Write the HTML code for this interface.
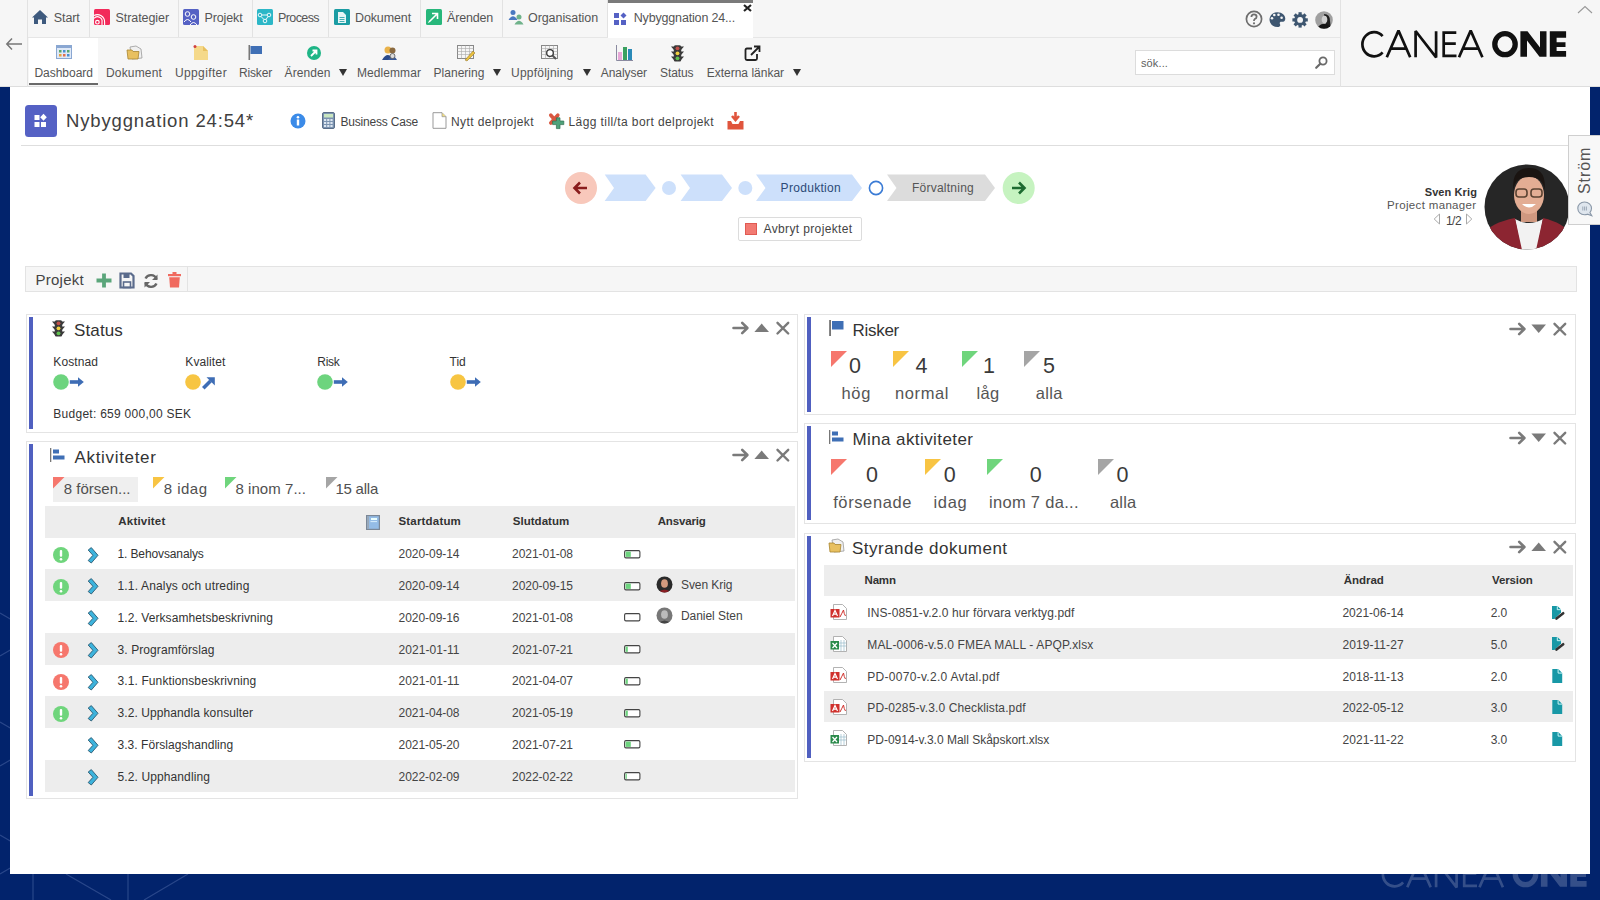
<!DOCTYPE html>
<html><head><meta charset="utf-8">
<style>
*{box-sizing:border-box;margin:0;padding:0}
html,body{width:1600px;height:900px;overflow:hidden}
body{font-family:"Liberation Sans",sans-serif;color:#333;background:#02236c;position:relative}
.a{position:absolute;white-space:nowrap}
svg.a{overflow:visible}
</style></head><body>
<svg class="a" style="left:0px;top:0px" width="1600" height="900" viewBox="0 0 1600 900">
<g stroke="#3a5697" stroke-width="1.2" fill="none" opacity="0.7">
<line x1="0" y1="613" x2="12" y2="620"/>
<line x1="0" y1="656" x2="12" y2="649"/>
<line x1="0" y1="722" x2="12" y2="729"/>
<line x1="0" y1="766" x2="12" y2="759"/>
<line x1="0" y1="835" x2="12" y2="842"/>
<line x1="0" y1="874" x2="12" y2="867"/>
<line x1="33" y1="874" x2="33" y2="900"/>
<line x1="128" y1="874" x2="128" y2="900"/>
<line x1="66" y1="874" x2="111" y2="900"/>
<line x1="188" y1="874" x2="144" y2="900"/>
</g></svg>
<div class="a" style="left:0px;top:0px;width:1600px;height:87px;background:#f6f6f6;border-bottom:1px solid #dedede"></div>
<div class="a" style="left:27px;top:0px;width:1px;height:87px;background:#e2e2e2"></div>
<div class="a" style="left:1340px;top:0px;width:1px;height:87px;background:#e2e2e2"></div>
<div class="a" style="left:28px;top:37px;width:1312px;height:1px;background:#e6e6e6"></div>
<div class="a" style="left:89px;top:0px;width:1px;height:37px;background:#e2e2e2"></div>
<div class="a" style="left:178px;top:0px;width:1px;height:37px;background:#e2e2e2"></div>
<div class="a" style="left:252px;top:0px;width:1px;height:37px;background:#e2e2e2"></div>
<div class="a" style="left:328px;top:0px;width:1px;height:37px;background:#e2e2e2"></div>
<div class="a" style="left:420px;top:0px;width:1px;height:37px;background:#e2e2e2"></div>
<div class="a" style="left:502px;top:0px;width:1px;height:37px;background:#e2e2e2"></div>
<div class="a" style="left:607px;top:0px;width:1px;height:37px;background:#e2e2e2"></div>
<div class="a" style="left:608px;top:0px;width:145px;height:38px;background:#fff"></div>
<div class="a" style="left:608px;top:0px;width:145px;height:3px;background:#7a7a7a"></div>
<svg class="a" style="left:742px;top:3px" width="11" height="10" viewBox="0 0 11 10"><path d="M2 2 L9 8 M9 2 L2 8" stroke="#222" stroke-width="2.2"/></svg>
<svg class="a" style="left:5px;top:36.5px" width="18" height="14" viewBox="0 0 18 14"><path d="M2 7 H17 M7 1.5 L1.8 7 L7 12.5" stroke="#777" stroke-width="1.5" fill="none"/></svg>
<svg class="a" style="left:32px;top:9px" width="16" height="16" viewBox="0 0 16 16"><path d="M8 1 L16 8.5 L14 8.5 L14 15 L10 15 L10 10.5 L6 10.5 L6 15 L2 15 L2 8.5 L0 8.5 Z" fill="#3e5a7e"/></svg>
<div class="a" style="left:53.80px;top:12.42px;font-size:12.5px;line-height:12.5px;color:#555;letter-spacing:-0.099px;">Start</div>
<svg class="a" style="left:94px;top:9px" width="16" height="16" viewBox="0 0 16 16"><rect x="0" y="0" width="16" height="16" rx="1.5" fill="#f22a5a"/><circle cx="3.4" cy="13.2" r="1.8" fill="none" stroke="#fff" stroke-width="1.2"/><path d="M0 9.3 A4.6 4.6 0 0 1 8 13.2 V16 M0 6.6 A7.2 7.2 0 0 1 10.6 13.2 V16" stroke="#fff" stroke-width="1.1" fill="none"/></svg>
<div class="a" style="left:115.50px;top:12.42px;font-size:12.5px;line-height:12.5px;color:#555;letter-spacing:-0.069px;">Strategier</div>
<svg class="a" style="left:183px;top:9px" width="16" height="16" viewBox="0 0 16 16"><rect x="0" y="0" width="16" height="16" rx="1.5" fill="#5561c4"/><circle cx="4.5" cy="5" r="2.3" fill="none" stroke="#fff" stroke-width="1"/><circle cx="10.5" cy="8" r="2.3" fill="none" stroke="#fff" stroke-width="1"/><path d="M1 13 Q4.5 8 8 13 M7 16 Q10.5 11 14 16" stroke="#fff" stroke-width="1" fill="none"/></svg>
<div class="a" style="left:204.50px;top:12.42px;font-size:12.5px;line-height:12.5px;color:#555;letter-spacing:-0.129px;">Projekt</div>
<svg class="a" style="left:256.5px;top:9px" width="16" height="16" viewBox="0 0 16 16"><rect x="0" y="0" width="16" height="16" rx="1.5" fill="#2cb7c7"/><circle cx="3" cy="6" r="1.8" fill="none" stroke="#fff" stroke-width="0.9"/><circle cx="12" cy="6" r="1.8" fill="none" stroke="#fff" stroke-width="0.9"/><circle cx="8" cy="12" r="1.8" fill="none" stroke="#fff" stroke-width="0.9"/><path d="M4.8 6 H10.2 M4 7.5 L7 10.5 M11 7.5 L9 10.5" stroke="#fff" stroke-width="0.9"/></svg>
<div class="a" style="left:278.00px;top:12.42px;font-size:12.5px;line-height:12.5px;color:#555;letter-spacing:-0.593px;">Process</div>
<svg class="a" style="left:334px;top:9px" width="16" height="16" viewBox="0 0 16 16"><rect x="0" y="0" width="16" height="16" rx="1.5" fill="#1a9ca3"/><path d="M4 3 H9 L12 6 V14 H4 Z" fill="#fff" opacity="0.9"/><path d="M5.5 8.5 H10.5 M5.5 10.5 H10.5 M5.5 12.5 H10.5" stroke="#1a9ca3" stroke-width="0.8"/></svg>
<div class="a" style="left:355.00px;top:12.42px;font-size:12.5px;line-height:12.5px;color:#555;letter-spacing:-0.121px;">Dokument</div>
<svg class="a" style="left:426px;top:9px" width="16" height="16" viewBox="0 0 16 16"><rect x="0" y="0" width="16" height="16" rx="1.5" fill="#27b77b"/><path d="M3 13 L11 5 M6 4.5 H11.5 V10" stroke="#fff" stroke-width="1.6" fill="none"/><path d="M2 14 L5 11" stroke="#fff" stroke-width="1" opacity=".6"/></svg>
<div class="a" style="left:447.00px;top:12.42px;font-size:12.5px;line-height:12.5px;color:#555;letter-spacing:-0.179px;">Ärenden</div>
<svg class="a" style="left:508px;top:9px" width="16" height="16" viewBox="0 0 16 16"><circle cx="5" cy="3.5" r="2.5" fill="#4a78c0"/><path d="M0.5 11 Q5 3.5 9.5 11 Z" fill="#4a78c0"/><circle cx="11" cy="8" r="2.5" fill="#6fb28a"/><path d="M6.5 15.5 Q11 8 15.5 15.5 Z" fill="#6fb28a"/></svg>
<div class="a" style="left:528.00px;top:12.42px;font-size:12.5px;line-height:12.5px;color:#555;letter-spacing:-0.072px;">Organisation</div>
<svg class="a" style="left:614px;top:11.5px" width="16" height="16" viewBox="0 0 16 16"><rect x="0" y="1" width="5" height="5" fill="#5561c4"/><path d="M9.5 0.5 L12.5 3.5 L9.5 6.5 L6.5 3.5 Z" fill="#5561c4"/><rect x="0" y="8" width="5" height="5" fill="#5561c4"/><rect x="7" y="8" width="5" height="5" fill="#5561c4"/></svg>
<div class="a" style="left:633.70px;top:12.42px;font-size:12.5px;line-height:12.5px;color:#555;letter-spacing:-0.163px;">Nybyggnation 24...</div>
<div class="a" style="left:29px;top:38px;width:69px;height:47px;background:#fff"></div>
<div class="a" style="left:29px;top:82.5px;width:69px;height:2.5px;background:#6a6a6a"></div>
<div class="a" style="left:34.40px;top:67.34px;font-size:12px;line-height:12px;color:#555;letter-spacing:-0.011px;">Dashboard</div>
<div class="a" style="left:106.00px;top:67.34px;font-size:12px;line-height:12px;color:#555;letter-spacing:0.164px;">Dokument</div>
<div class="a" style="left:175.00px;top:67.34px;font-size:12px;line-height:12px;color:#555;letter-spacing:0.368px;">Uppgifter</div>
<div class="a" style="left:239.00px;top:67.34px;font-size:12px;line-height:12px;color:#555;letter-spacing:-0.167px;">Risker</div>
<div class="a" style="left:284.60px;top:67.34px;font-size:12px;line-height:12px;color:#555;letter-spacing:0.062px;">Ärenden</div>
<div class="a" style="left:357.00px;top:67.34px;font-size:12px;line-height:12px;color:#555;letter-spacing:0.073px;">Medlemmar</div>
<div class="a" style="left:433.60px;top:67.34px;font-size:12px;line-height:12px;color:#555;letter-spacing:0.011px;">Planering</div>
<div class="a" style="left:511.00px;top:67.34px;font-size:12px;line-height:12px;color:#555;letter-spacing:0.224px;">Uppföljning</div>
<div class="a" style="left:600.70px;top:67.34px;font-size:12px;line-height:12px;color:#555;letter-spacing:-0.048px;">Analyser</div>
<div class="a" style="left:660.00px;top:67.34px;font-size:12px;line-height:12px;color:#555;letter-spacing:-0.086px;">Status</div>
<div class="a" style="left:706.70px;top:67.34px;font-size:12px;line-height:12px;color:#555;">Externa länkar</div>
<svg class="a" style="left:339.4px;top:68.5px" width="8" height="7" viewBox="0 0 8 7"><path d="M0 0 H8 L4 7 Z" fill="#333"/></svg>
<svg class="a" style="left:493px;top:68.5px" width="8" height="7" viewBox="0 0 8 7"><path d="M0 0 H8 L4 7 Z" fill="#333"/></svg>
<svg class="a" style="left:583px;top:68.5px" width="8" height="7" viewBox="0 0 8 7"><path d="M0 0 H8 L4 7 Z" fill="#333"/></svg>
<svg class="a" style="left:793px;top:68.5px" width="8" height="7" viewBox="0 0 8 7"><path d="M0 0 H8 L4 7 Z" fill="#333"/></svg>
<svg class="a" style="left:56px;top:44.5px" width="16" height="14" viewBox="0 0 16 14"><rect x="0.5" y="0.5" width="15" height="13" fill="#dfe9f7" stroke="#8aa7d2"/><rect x="0.5" y="0.5" width="15" height="2.5" fill="#8aa7d2"/><rect x="3" y="5" width="2.5" height="2.5" fill="#5aa86a"/><rect x="7" y="5" width="2.5" height="2.5" fill="#4a8fd0"/><rect x="11" y="5" width="2.5" height="2.5" fill="#5aa86a"/><rect x="3" y="9" width="2.5" height="2.5" fill="#e8a33d"/><rect x="7" y="9" width="2.5" height="2.5" fill="#e07050"/><rect x="11" y="9" width="2.5" height="2.5" fill="#4a8fd0"/></svg>
<svg class="a" style="left:126px;top:45px" width="17" height="15" viewBox="0 0 17 15"><path d="M4 2 L10 1 L15 4 L16 13 L6 14 Z" fill="#f0f0f0" stroke="#999" stroke-width="0.8"/><path d="M1 5 H6 L7 6.5 H13 L12 14 H2 Z" fill="#e8c060" stroke="#a88530" stroke-width="0.8"/></svg>
<svg class="a" style="left:193px;top:45px" width="16" height="15" viewBox="0 0 16 15"><path d="M1 1 H10 L15 6 V15 H1 Z" fill="#f5d98a"/><path d="M10 1 V6 H15" fill="#e8c060"/><circle cx="2" cy="1.5" r="1.5" fill="#d04040"/></svg>
<svg class="a" style="left:248px;top:45px" width="15" height="15" viewBox="0 0 15 15"><rect x="0.5" y="0" width="1.6" height="15" fill="#777"/><path d="M2.5 1 H14 V9 H2.5 Z" fill="#3f6fb5"/></svg>
<svg class="a" style="left:307px;top:46px" width="14" height="14" viewBox="0 0 14 14"><circle cx="7" cy="7" r="7" fill="#1eb586"/><path d="M4 10 L9 5 M5.5 4.5 H9.5 V8.5" stroke="#fff" stroke-width="1.8" fill="none"/></svg>
<svg class="a" style="left:381px;top:45px" width="17" height="16" viewBox="0 0 17 16"><circle cx="7" cy="5" r="3.5" fill="#e9b24a"/><path d="M1 15 Q7 5 12 15 Z" fill="#2a4a8a"/><circle cx="11.5" cy="5.5" r="3" fill="#8a6a40"/><path d="M7 15 Q11.5 7 16 15 Z" fill="#3a5a9a"/><circle cx="11.5" cy="11" r="2.5" fill="#ddd" stroke="#555" stroke-width="0.8"/></svg>
<svg class="a" style="left:457px;top:45px" width="18" height="16" viewBox="0 0 18 16"><rect x="0.5" y="0.5" width="16" height="13" fill="#f6f6f6" stroke="#888"/><path d="M0.5 3.5 H16.5 M0.5 6.5 H16.5 M0.5 9.5 H16.5 M4.5 0.5 V13.5 M8.5 0.5 V13.5 M12.5 0.5 V13.5" stroke="#aaa" stroke-width="0.6"/><path d="M8 15 L16 6 L18 8 L10 16 Z" fill="#e8c040" stroke="#8a6a20" stroke-width="0.5"/></svg>
<svg class="a" style="left:541px;top:45px" width="18" height="16" viewBox="0 0 18 16"><rect x="0.5" y="0.5" width="16" height="13" fill="#f6f6f6" stroke="#888"/><path d="M0.5 3.5 H16.5 M0.5 6.5 H16.5 M0.5 9.5 H16.5 M4.5 0.5 V13.5 M8.5 0.5 V13.5 M12.5 0.5 V13.5" stroke="#aaa" stroke-width="0.6"/><circle cx="9" cy="8" r="3.3" fill="#fff" stroke="#333" stroke-width="1.3"/><path d="M11.5 10.5 L15 14" stroke="#555" stroke-width="2"/></svg>
<svg class="a" style="left:616px;top:45px" width="17" height="16" viewBox="0 0 17 16"><path d="M0.5 0 V15.5 H17" stroke="#8a8aa0" stroke-width="1" fill="none"/><rect x="2" y="7" width="4" height="8" fill="#e8a8d8"/><rect x="7" y="2" width="4" height="13" fill="#3aa060"/><rect x="12" y="4" width="4" height="11" fill="#2a8ab8"/></svg>
<svg class="a" style="left:670.5px;top:44.5px" width="13" height="17" viewBox="0 0 13 17"><rect x="2.8" y="0.3" width="7.4" height="16.2" rx="1.6" fill="#3a3a3a"/><path d="M0 1.5 H3 V5 Z M13 1.5 H10 V5 Z M0 6.5 H3 V10 Z M13 6.5 H10 V10 Z M0 11.5 H3 V15 Z M13 11.5 H10 V15 Z" fill="#3a3a3a"/><circle cx="6.5" cy="3.3" r="1.9" fill="#c0504a"/><circle cx="6.5" cy="8.3" r="1.9" fill="#f0d040"/><circle cx="6.5" cy="13.3" r="1.9" fill="#60c050"/></svg>
<svg class="a" style="left:744px;top:45px" width="17" height="16" viewBox="0 0 17 16"><path d="M8 3.5 H3 Q1.5 3.5 1.5 5 V13.5 Q1.5 15 3 15 H11.5 Q13 15 13 13.5 V9" stroke="#222" stroke-width="1.8" fill="none"/><path d="M7 10 L15 2 M10 1.5 H15.5 V7" stroke="#222" stroke-width="1.8" fill="none"/></svg>
<svg class="a" style="left:1244px;top:10px" width="20" height="20" viewBox="0 0 20 20"><circle cx="10" cy="9" r="7.6" fill="none" stroke="#6e6e6e" stroke-width="1.7"/><path d="M7.4 7 Q7.4 4.4 10 4.4 Q12.6 4.4 12.6 6.8 Q12.6 8.4 10.6 9.2 Q10 9.5 10 11" stroke="#6e6e6e" stroke-width="1.8" fill="none"/><circle cx="10" cy="13.3" r="1.1" fill="#6e6e6e"/></svg>
<svg class="a" style="left:1269px;top:12px" width="17" height="16" viewBox="0 0 17 16"><path d="M8.5 0.3 C13.3 0.3 16.3 3.3 16.3 6.8 C16.3 9.6 14 10 12.5 9.8 C11 9.6 10.3 10.8 11 12.3 C11.8 14 10.5 15 8.5 15 C4 15 0.5 11.8 0.5 7.6 C0.5 3.6 4 0.3 8.5 0.3 Z" fill="#3e5670"/><circle cx="3" cy="6.2" r="1.3" fill="#f6f6f6"/><circle cx="5.3" cy="3" r="1.3" fill="#f6f6f6"/><circle cx="9.5" cy="2.7" r="1.3" fill="#f6f6f6"/><circle cx="12.6" cy="5.7" r="1.3" fill="#f6f6f6"/></svg>
<svg class="a" style="left:1292px;top:11.5px" width="17" height="16" viewBox="0 0 17 16"><g transform="translate(8.1 7.9)" fill="#3e5670"><circle r="5.9"/><rect x="-1.6" y="-7.7" width="3.2" height="3" transform="rotate(0)"/><rect x="-1.6" y="-7.7" width="3.2" height="3" transform="rotate(45)"/><rect x="-1.6" y="-7.7" width="3.2" height="3" transform="rotate(90)"/><rect x="-1.6" y="-7.7" width="3.2" height="3" transform="rotate(135)"/><rect x="-1.6" y="-7.7" width="3.2" height="3" transform="rotate(180)"/><rect x="-1.6" y="-7.7" width="3.2" height="3" transform="rotate(225)"/><rect x="-1.6" y="-7.7" width="3.2" height="3" transform="rotate(270)"/><rect x="-1.6" y="-7.7" width="3.2" height="3" transform="rotate(315)"/><circle r="2.9" fill="#f6f6f6"/></g></svg>
<svg class="a" style="left:1315px;top:10.5px" width="18" height="18" viewBox="0 0 18 18"><defs><clipPath id="av0"><circle cx="9" cy="9" r="8.8"/></clipPath></defs><circle cx="9" cy="9" r="8.8" fill="#a0a0a0"/><g clip-path="url(#av0)"><path d="M9 3 Q15 3 15 10 L16 18 L11 14 Z" fill="#1e1e1e"/><ellipse cx="9.5" cy="8.5" rx="2.8" ry="3.8" fill="#d0d0d0"/><path d="M1 19 Q5 12 9 13 Q14 12 17 19 Z" fill="#151515"/></g></svg>
<div class="a" style="left:1135px;top:50px;width:200px;height:25px;background:#fff;border:1px solid #dcdcdc"></div>
<div class="a" style="left:1141.00px;top:57.69px;font-size:11px;line-height:11px;color:#606060;letter-spacing:0.119px;">sök...</div>
<svg class="a" style="left:1315px;top:56px" width="13" height="13" viewBox="0 0 13 13"><circle cx="8" cy="5" r="3.6" fill="none" stroke="#6a6a6a" stroke-width="1.8"/><path d="M5.3 7.7 L1.2 11.8" stroke="#6a6a6a" stroke-width="2.2" stroke-linecap="round"/></svg>
<svg class="a" style="left:1577px;top:5px" width="16" height="9" viewBox="0 0 16 9"><path d="M1 8 L8 1.5 L15 8" stroke="#999" stroke-width="1.1" fill="none"/></svg>
<svg class="a" style="left:0px;top:0px" width="1600" height="90" viewBox="0 0 1600 90"><g transform="translate(0 0.0)" opacity="1.0"><path d="M1382.6 36.2 A11.6 12.1 0 1 0 1382.6 52.4" stroke="#111" stroke-width="2.7" fill="none" stroke-miterlimit="1.5"/><path d="M1386.8 57.2 L1398.5 30.6 L1410.2 57.2 M1390.5 48.6 H1406.5" stroke="#111" stroke-width="2.7" fill="none" stroke-miterlimit="1.5"/><path d="M1415.6 57.2 V31.0 L1436.1 57.4 V31.2" stroke="#111" stroke-width="2.7" fill="none" stroke-miterlimit="1.5"/><path d="M1456.3 32.7 H1443.7 V55.8 H1456.5 M1443.7 43.6 H1455.8" stroke="#111" stroke-width="2.7" fill="none" stroke-miterlimit="1.5"/><path d="M1459 57.2 L1470.7 30.6 L1482.4 57.2 M1462.7 48.6 H1478.7" stroke="#111" stroke-width="2.7" fill="none" stroke-miterlimit="1.5"/><ellipse cx="1505" cy="44.2" rx="10.2" ry="10.5" stroke="#111" stroke-width="5.3" fill="none"/><path d="M1520.4 56.8 V31.2 H1527.5 L1540 47.5 V31.2 H1546.5 V56.8 H1539.5 L1527 40.5 V56.8 Z" fill="#111"/><path d="M1549.8 31.2 H1566.1 V37.8 H1556.6 V42.2 H1565.5 V47 H1556.6 V51.1 H1566.1 V56.8 H1549.8 Z" fill="#111"/></g></svg>
<div class="a" style="left:10px;top:87px;width:1580px;height:787px;background:#fff"></div>
<div class="a" style="left:25px;top:105px;width:32px;height:31.5px;background:#5561c4;border-radius:3.5px"></div>
<svg class="a" style="left:33px;top:113px" width="16" height="16" viewBox="0 0 16 16"><rect x="1.5" y="2" width="5" height="5" fill="#fff"/><path d="M10.5 0.8 L13.8 4.3 L10.5 7.8 L7.2 4.3 Z" fill="#fff"/><rect x="1.5" y="9" width="5" height="5" fill="#fff"/><rect x="8" y="9" width="5" height="5" fill="#fff"/></svg>
<div class="a" style="left:66.00px;top:112.34px;font-size:18.5px;line-height:18.5px;color:#404040;letter-spacing:0.855px;">Nybyggnation 24:54*</div>
<div class="a" style="left:21px;top:145px;width:1547px;height:1px;background:#dedede"></div>
<svg class="a" style="left:290px;top:113px" width="16" height="16" viewBox="0 0 16 16"><circle cx="8" cy="8" r="7.5" fill="#3b8be8"/><circle cx="8" cy="4.3" r="1.3" fill="#fff"/><rect x="6.8" y="6.5" width="2.4" height="6" fill="#fff"/></svg>
<svg class="a" style="left:322px;top:112px" width="13" height="17" viewBox="0 0 13 17"><rect x="0.5" y="0.5" width="12" height="16" rx="1.5" fill="#7b93b0" stroke="#5a6e88"/><rect x="2" y="2" width="9" height="3.5" fill="#c9e6c0"/><rect x="2.0" y="7" width="2.2" height="2" fill="#dde6f0"/><rect x="5.2" y="7" width="2.2" height="2" fill="#dde6f0"/><rect x="8.4" y="7" width="2.2" height="2" fill="#dde6f0"/><rect x="2.0" y="10" width="2.2" height="2" fill="#dde6f0"/><rect x="5.2" y="10" width="2.2" height="2" fill="#dde6f0"/><rect x="8.4" y="10" width="2.2" height="2" fill="#dde6f0"/><rect x="2.0" y="13" width="2.2" height="2" fill="#dde6f0"/><rect x="5.2" y="13" width="2.2" height="2" fill="#dde6f0"/><rect x="8.4" y="13" width="2.2" height="2" fill="#dde6f0"/></svg>
<div class="a" style="left:340.50px;top:115.84px;font-size:12px;line-height:12px;color:#444;letter-spacing:-0.195px;">Business Case</div>
<svg class="a" style="left:432px;top:112px" width="15" height="17" viewBox="0 0 15 17"><path d="M1 0.7 H10 L14 4.7 V16.3 H1 Z" fill="#fff" stroke="#999" stroke-width="1"/><path d="M10 0.7 V4.7 H14" fill="#f5e080" stroke="#999" stroke-width="0.8"/></svg>
<div class="a" style="left:451.00px;top:115.84px;font-size:12px;line-height:12px;color:#444;letter-spacing:0.420px;">Nytt delprojekt</div>
<svg class="a" style="left:548px;top:112px" width="17" height="17" viewBox="0 0 17 17"><path d="M2.8 3.2 L9.8 11 M9.8 3.2 L2.8 11" stroke="#d9573f" stroke-width="3.6" stroke-linecap="round"/><path d="M8.4 5.8 H12 V9 H15.8 V12.6 H12 V16.6 H8.4 V12.6 H4.6 V9 H8.4 Z" fill="#4fa27a" stroke="#2f7050" stroke-width="0.7"/></svg>
<div class="a" style="left:568.50px;top:115.84px;font-size:12px;line-height:12px;color:#444;letter-spacing:0.408px;">Lägg till/ta bort delprojekt</div>
<svg class="a" style="left:727px;top:112px" width="17" height="18" viewBox="0 0 17 18"><path d="M8.5 0 V7 M5 4 L8.5 8 L12 4" stroke="#e0553d" stroke-width="2.6" fill="none"/><path d="M0.5 9 H4 L5.5 12 H11.5 L13 9 H16.5 V17.5 H0.5 Z" fill="#e0553d"/></svg>
<svg class="a" style="left:560px;top:168px" width="480" height="40" viewBox="0 0 480 40">
<circle cx="21" cy="20" r="16" fill="#f8c8bb"/>
<path d="M27 20 H15 M20 14.5 L14.5 20 L20 25.5" stroke="#8a1c1c" stroke-width="2.6" fill="none"/>
<path d="M44.7 6.4 H85.6 L95.6 20 L85.6 33 H44.7 L54 20 Z" fill="#cde0fb"/>
<circle cx="109" cy="20" r="7" fill="#cde0fb"/>
<path d="M120.6 6.4 H162 L172 20 L162 33 H120.6 L130 20 Z" fill="#cde0fb"/>
<circle cx="185.3" cy="20" r="7" fill="#cde0fb"/>
<path d="M196 6.4 H292 L302 20 L292 33 H196 L205.5 20 Z" fill="#cde0fb"/>
<circle cx="316" cy="20" r="6.6" fill="#fff" stroke="#3a7bd5" stroke-width="1.6"/>
<path d="M327 6.4 H425 L435 20 L425 33 H327 L336.5 20 Z" fill="#dcdcdc"/>
<circle cx="458.7" cy="20" r="16" fill="#c6f3c0"/>
<path d="M452 20 H464 M459 14.5 L464.5 20 L459 25.5" stroke="#1d6b30" stroke-width="2.6" fill="none"/>
</svg>
<div class="a" style="left:780.60px;top:181.84px;font-size:12px;line-height:12px;color:#2c4a78;letter-spacing:0.303px;">Produktion</div>
<div class="a" style="left:912.00px;top:181.84px;font-size:12px;line-height:12px;color:#555;letter-spacing:0.240px;">Förvaltning</div>
<div class="a" style="left:738px;top:216.5px;width:123.5px;height:24.5px;border:1px solid #dcdcdc;border-radius:2px;background:#fff"></div>
<div class="a" style="left:745px;top:223px;width:12px;height:12px;background:#f27a72;border:1px solid #e05a52"></div>
<div class="a" style="left:763.50px;top:223.34px;font-size:12px;line-height:12px;color:#444;letter-spacing:0.366px;">Avbryt projektet</div>
<div class="a" style="left:1424.70px;top:186.69px;font-size:11px;line-height:11px;color:#333;font-weight:700;letter-spacing:0.106px;">Sven Krig</div>
<div class="a" style="left:1387.00px;top:200.27px;font-size:11.5px;line-height:11.5px;color:#555;letter-spacing:0.342px;">Project manager</div>
<div class="a" style="left:1446.00px;top:214.84px;font-size:12px;line-height:12px;color:#444;letter-spacing:-0.560px;">1/2</div>
<svg class="a" style="left:1433px;top:213px" width="8" height="12" viewBox="0 0 8 12"><path d="M6.5 1 L1.2 6 L6.5 11 Z" fill="none" stroke="#aaa" stroke-width="1"/></svg>
<svg class="a" style="left:1465px;top:213px" width="8" height="12" viewBox="0 0 8 12"><path d="M1.5 1 L6.8 6 L1.5 11 Z" fill="none" stroke="#aaa" stroke-width="1"/></svg>
<svg class="a" style="left:1484px;top:164px" width="86" height="86" viewBox="0 0 86 86"><defs><clipPath id="avb"><circle cx="43" cy="43" r="42.5"/></clipPath></defs>
<g clip-path="url(#avb)">
<rect width="86" height="86" fill="#262626"/>
<rect x="37" y="42" width="16" height="16" fill="#cf9880"/>
<path d="M31 55 Q45 63 59 55 L53 86 H37 Z" fill="#f2f2f2"/>
<path d="M0 86 V70 Q6 59 31 54 L38 86 Z M86 86 V70 Q80 59 59 54 L52 86 Z" fill="#8c2531"/>
<ellipse cx="45" cy="31" rx="15" ry="19" fill="#e3ad94"/>
<path d="M29.5 27 Q27 4 45 4 Q63 4 60.5 27 Q60 13 45 13 Q30 13 29.5 27 Z" fill="#1a1411"/>
<rect x="32" y="25" width="11" height="8" rx="3" fill="none" stroke="#5a4232" stroke-width="1.6"/>
<rect x="47" y="25" width="11" height="8" rx="3" fill="none" stroke="#5a4232" stroke-width="1.6"/>
<path d="M38 40 Q45 47 52 40 Z" fill="#fff"/>
</g></svg>
<div class="a" style="left:1568px;top:134.5px;width:32px;height:90px;background:#f8f8f8;border:1px solid #cfcfcf;border-right:none"></div>
<div class="a" style="left:1577.3px;top:193.5px;font-size:16px;line-height:16px;color:#555;letter-spacing:0.9px;transform:rotate(-90deg);transform-origin:0 0">Ström</div>
<svg class="a" style="left:1577px;top:200.5px" width="16" height="16" viewBox="0 0 16 16"><path d="M7.5 1 C11.5 1 14.5 3.8 14.5 7.3 C14.5 9 13.9 10.4 12.9 11.5 L14.8 14.8 L10.5 13.2 C9.6 13.5 8.6 13.7 7.5 13.7 C3.5 13.7 0.8 10.8 0.8 7.3 C0.8 3.8 3.5 1 7.5 1 Z" fill="#dfe6ee" stroke="#8a98a8" stroke-width="1.1"/><path d="M5.8 5.5 V9.5 M7.6 5.5 V9.5 M9.4 5.5 V9.5" stroke="#8a98a8" stroke-width="0.8"/></svg>
<div class="a" style="left:25px;top:266px;width:1552px;height:26px;background:#f6f6f6;border:1px solid #e3e3e3"></div>
<div class="a" style="left:187px;top:267px;width:1px;height:24px;background:#e3e3e3"></div>
<div class="a" style="left:35.50px;top:272.30px;font-size:15px;line-height:15px;color:#444;letter-spacing:0.260px;">Projekt</div>
<svg class="a" style="left:96px;top:273px" width="16" height="15" viewBox="0 0 16 15"><path d="M8 0.5 V14.5 M0.5 7.5 H15.5" stroke="#5aa57a" stroke-width="3.8"/></svg>
<svg class="a" style="left:120px;top:273px" width="14" height="15" viewBox="0 0 14 15"><path d="M0.5 0.5 H11 L13.5 3 V14.5 H0.5 Z" fill="none" stroke="#5a6b8c" stroke-width="2.2"/><rect x="3.5" y="1" width="6" height="4" fill="#5a6b8c"/><rect x="3.5" y="9" width="7" height="5.5" fill="none" stroke="#5a6b8c" stroke-width="1.6"/></svg>
<svg class="a" style="left:142.5px;top:272.5px" width="16" height="16" viewBox="0 0 16 16"><path d="M13.5 6 A6 6 0 0 0 2.5 5.5 M2.5 10 A6 6 0 0 0 13.5 10.5" stroke="#666" stroke-width="2.4" fill="none"/><path d="M14.5 1.5 V7 H9 Z M1.5 14.5 V9 H7 Z" fill="#666"/></svg>
<svg class="a" style="left:167.5px;top:272px" width="13" height="16" viewBox="0 0 13 16"><rect x="0" y="2" width="13" height="2.2" fill="#f06a5f"/><rect x="4.5" y="0" width="4" height="2.5" fill="#f06a5f"/><path d="M1.2 5.2 H11.8 L11 15.5 H2 Z" fill="#f06a5f"/></svg>
<div class="a" style="left:26px;top:314px;width:772px;height:118.5px;background:#fff;border:1px solid #e4e4e4"></div>
<div class="a" style="left:29px;top:317px;width:4px;height:112.0px;background:#5060c0"></div>
<svg class="a" style="left:51.5px;top:320px" width="13" height="17" viewBox="0 0 13 17"><rect x="2.8" y="0.3" width="7.4" height="16.2" rx="1.6" fill="#3a3a3a"/><path d="M0 1.5 H3 V5 Z M13 1.5 H10 V5 Z M0 6.5 H3 V10 Z M13 6.5 H10 V10 Z M0 11.5 H3 V15 Z M13 11.5 H10 V15 Z" fill="#3a3a3a"/><circle cx="6.5" cy="3.3" r="1.9" fill="#c0504a"/><circle cx="6.5" cy="8.3" r="1.9" fill="#f0d040"/><circle cx="6.5" cy="13.3" r="1.9" fill="#60c050"/></svg>
<div class="a" style="left:74.00px;top:321.61px;font-size:17px;line-height:17px;color:#333;letter-spacing:0.135px;">Status</div>
<svg class="a" style="left:732px;top:321px" width="60" height="14" viewBox="0 0 60 14"><path d="M1.5 7 H15 M10.2 1.8 L15.4 7 L10.2 12.2" stroke="#7a7a7a" stroke-width="2.6" fill="none" stroke-linecap="round" stroke-linejoin="round"/>
<path d="M22.4 11 L29.7 2.6 L37 11 Z" fill="#7a7a7a"/>
<path d="M45.5 1.8 L56.2 12.5 M56.2 1.8 L45.5 12.5" stroke="#7a7a7a" stroke-width="2.4" stroke-linecap="round"/></svg>
<div class="a" style="left:53.30px;top:356.34px;font-size:12px;line-height:12px;color:#333;letter-spacing:0.096px;">Kostnad</div>
<svg class="a" style="left:53.3px;top:374px" width="32" height="16" viewBox="0 0 32 16"><circle cx="8" cy="8" r="7.8" fill="#6dd47e"/><rect x="16.8" y="6.2" width="9.5" height="3.6" fill="#3e6db5"/><path d="M25 3.2 L30.8 8 L25 12.8 Z" fill="#3e6db5"/></svg>
<div class="a" style="left:185.30px;top:356.34px;font-size:12px;line-height:12px;color:#333;letter-spacing:0.106px;">Kvalitet</div>
<svg class="a" style="left:185.3px;top:374px" width="32" height="16" viewBox="0 0 32 16"><circle cx="8" cy="8" r="7.8" fill="#f7c542"/><path d="M18.3 14.2 L25.5 7" stroke="#3e6db5" stroke-width="3.6"/><path d="M21.5 3.2 H29.8 V11.5 Z" fill="#3e6db5"/></svg>
<div class="a" style="left:317.30px;top:356.34px;font-size:12px;line-height:12px;color:#333;letter-spacing:-0.283px;">Risk</div>
<svg class="a" style="left:317.3px;top:374px" width="32" height="16" viewBox="0 0 32 16"><circle cx="8" cy="8" r="7.8" fill="#6dd47e"/><rect x="16.8" y="6.2" width="9.5" height="3.6" fill="#3e6db5"/><path d="M25 3.2 L30.8 8 L25 12.8 Z" fill="#3e6db5"/></svg>
<div class="a" style="left:449.50px;top:356.34px;font-size:12px;line-height:12px;color:#333;letter-spacing:0.025px;">Tid</div>
<svg class="a" style="left:449.5px;top:374px" width="32" height="16" viewBox="0 0 32 16"><circle cx="8" cy="8" r="7.8" fill="#f7c542"/><rect x="16.8" y="6.2" width="9.5" height="3.6" fill="#3e6db5"/><path d="M25 3.2 L30.8 8 L25 12.8 Z" fill="#3e6db5"/></svg>
<div class="a" style="left:53.30px;top:407.84px;font-size:12px;line-height:12px;color:#333;letter-spacing:0.268px;">Budget: 659 000,00 SEK</div>
<div class="a" style="left:26px;top:441px;width:772px;height:358px;background:#fff;border:1px solid #e4e4e4"></div>
<div class="a" style="left:29px;top:444px;width:4px;height:351.5px;background:#5060c0"></div>
<svg class="a" style="left:50px;top:448px" width="15" height="14" viewBox="0 0 15 14"><rect x="0" y="0" width="1.3" height="14" fill="#777"/><rect x="3" y="1.5" width="6" height="4" fill="#3f6fb5"/><rect x="3" y="7.5" width="11.5" height="4" fill="#3f6fb5"/></svg>
<div class="a" style="left:74.50px;top:448.61px;font-size:17px;line-height:17px;color:#333;letter-spacing:0.670px;">Aktiviteter</div>
<svg class="a" style="left:732px;top:448px" width="60" height="14" viewBox="0 0 60 14"><path d="M1.5 7 H15 M10.2 1.8 L15.4 7 L10.2 12.2" stroke="#7a7a7a" stroke-width="2.6" fill="none" stroke-linecap="round" stroke-linejoin="round"/>
<path d="M22.4 11 L29.7 2.6 L37 11 Z" fill="#7a7a7a"/>
<path d="M45.5 1.8 L56.2 12.5 M56.2 1.8 L45.5 12.5" stroke="#7a7a7a" stroke-width="2.4" stroke-linecap="round"/></svg>
<div class="a" style="left:53px;top:476.5px;width:85px;height:25px;background:#efefef"></div>
<svg class="a" style="left:53px;top:477px" width="11.5" height="11.5" viewBox="0 0 11.5 11.5"><path d="M0 0 H11.5 L0 11.5 Z" fill="#f6776d"/></svg>
<div class="a" style="left:63.80px;top:481.00px;font-size:15px;line-height:15px;color:#505050;">8 försen...</div>
<svg class="a" style="left:153px;top:477px" width="11.5" height="11.5" viewBox="0 0 11.5 11.5"><path d="M0 0 H11.5 L0 11.5 Z" fill="#f8c443"/></svg>
<div class="a" style="left:163.80px;top:481.00px;font-size:15px;line-height:15px;color:#505050;letter-spacing:0.472px;">8 idag</div>
<svg class="a" style="left:225px;top:477px" width="11.5" height="11.5" viewBox="0 0 11.5 11.5"><path d="M0 0 H11.5 L0 11.5 Z" fill="#6fd57c"/></svg>
<div class="a" style="left:235.50px;top:481.00px;font-size:15px;line-height:15px;color:#505050;letter-spacing:0.043px;">8 inom 7...</div>
<svg class="a" style="left:325.5px;top:477px" width="11.5" height="11.5" viewBox="0 0 11.5 11.5"><path d="M0 0 H11.5 L0 11.5 Z" fill="#a5a5a5"/></svg>
<div class="a" style="left:335.50px;top:481.00px;font-size:15px;line-height:15px;color:#505050;letter-spacing:-0.243px;">15 alla</div>
<div class="a" style="left:45px;top:506px;width:750px;height:32px;background:#ededed"></div>
<div class="a" style="left:118.30px;top:516.27px;font-size:11.5px;line-height:11.5px;color:#333;font-weight:700;letter-spacing:0.204px;">Aktivitet</div>
<svg class="a" style="left:366px;top:515px" width="14" height="15" viewBox="0 0 14 15"><rect x="0.6" y="0.6" width="12.8" height="13.8" fill="#94bce6" stroke="#7b8796" stroke-width="1.2"/><rect x="1.2" y="1.2" width="1.8" height="12.6" fill="#9aa8b8"/><rect x="5" y="3" width="6" height="2" fill="#eaffff"/><rect x="4.5" y="6.2" width="6.5" height="0.9" fill="#e0f4ff"/></svg>
<div class="a" style="left:398.50px;top:516.27px;font-size:11.5px;line-height:11.5px;color:#333;font-weight:700;letter-spacing:0.180px;">Startdatum</div>
<div class="a" style="left:512.80px;top:516.27px;font-size:11.5px;line-height:11.5px;color:#333;font-weight:700;letter-spacing:0.020px;">Slutdatum</div>
<div class="a" style="left:657.70px;top:516.27px;font-size:11.5px;line-height:11.5px;color:#333;font-weight:700;letter-spacing:-0.164px;">Ansvarig</div>
<svg class="a" style="left:53px;top:546.8000000000001px" width="16" height="16" viewBox="0 0 16 16"><circle cx="8" cy="8" r="8" fill="#6fd57c"/><rect x="6.8" y="3" width="2.4" height="6.8" rx="1" fill="#fff"/><circle cx="8" cy="12.2" r="1.3" fill="#fff"/></svg>
<svg class="a" style="left:86.5px;top:546.6px" width="12" height="17" viewBox="0 0 12 17"><path d="M1.2 3 L4.3 0.6 L11 8.3 L4.3 16 L1.2 13.6 L5.9 8.3 Z" fill="#3db3dc" stroke="#2d5a72" stroke-width="0.9" stroke-linejoin="round"/></svg>
<div class="a" style="left:117.50px;top:548.44px;font-size:12px;line-height:12px;color:#333;letter-spacing:-0.120px;">1. Behovsanalys</div>
<div class="a" style="left:398.50px;top:548.44px;font-size:12px;line-height:12px;color:#444;letter-spacing:-0.038px;">2020-09-14</div>
<div class="a" style="left:512.00px;top:548.44px;font-size:12px;line-height:12px;color:#444;letter-spacing:-0.038px;">2021-01-08</div>
<svg class="a" style="left:624px;top:549.9px" width="17" height="9" viewBox="0 0 17 9"><rect x="0.6" y="0.6" width="15.3" height="7.3" rx="1.3" fill="#fff" stroke="#444" stroke-width="1.1"/><rect x="1.6" y="1.6" width="5.2" height="5.3" fill="#6dd47e"/></svg>
<div class="a" style="left:45px;top:569.35px;width:750px;height:31.75px;background:#ededed"></div>
<svg class="a" style="left:53px;top:578.5500000000001px" width="16" height="16" viewBox="0 0 16 16"><circle cx="8" cy="8" r="8" fill="#6fd57c"/><rect x="6.8" y="3" width="2.4" height="6.8" rx="1" fill="#fff"/><circle cx="8" cy="12.2" r="1.3" fill="#fff"/></svg>
<svg class="a" style="left:86.5px;top:578.35px" width="12" height="17" viewBox="0 0 12 17"><path d="M1.2 3 L4.3 0.6 L11 8.3 L4.3 16 L1.2 13.6 L5.9 8.3 Z" fill="#3db3dc" stroke="#2d5a72" stroke-width="0.9" stroke-linejoin="round"/></svg>
<div class="a" style="left:117.50px;top:580.19px;font-size:12px;line-height:12px;color:#333;letter-spacing:0.163px;">1.1. Analys och utreding</div>
<div class="a" style="left:398.50px;top:580.19px;font-size:12px;line-height:12px;color:#444;letter-spacing:-0.038px;">2020-09-14</div>
<div class="a" style="left:512.00px;top:580.19px;font-size:12px;line-height:12px;color:#444;letter-spacing:-0.038px;">2020-09-15</div>
<svg class="a" style="left:624px;top:581.65px" width="17" height="9" viewBox="0 0 17 9"><rect x="0.6" y="0.6" width="15.3" height="7.3" rx="1.3" fill="#fff" stroke="#444" stroke-width="1.1"/><rect x="1.6" y="1.6" width="5.2" height="5.3" fill="#6dd47e"/></svg>
<svg class="a" style="left:656px;top:575.5500000000001px" width="17" height="17" viewBox="0 0 17 17"><defs><clipPath id="sa1"><circle cx="8.5" cy="8.5" r="8"/></clipPath></defs><circle cx="8.5" cy="8.5" r="8" fill="#2a2a2a"/><g clip-path="url(#sa1)"><ellipse cx="8.5" cy="7.5" rx="3.4" ry="4.3" fill="#d49a7e"/><path d="M1 17 Q8.5 10 16 17 Z" fill="#8a1f24"/></g></svg>
<div class="a" style="left:681.00px;top:578.69px;font-size:12px;line-height:12px;color:#444;letter-spacing:-0.080px;">Sven Krig</div>
<svg class="a" style="left:86.5px;top:610.1px" width="12" height="17" viewBox="0 0 12 17"><path d="M1.2 3 L4.3 0.6 L11 8.3 L4.3 16 L1.2 13.6 L5.9 8.3 Z" fill="#3db3dc" stroke="#2d5a72" stroke-width="0.9" stroke-linejoin="round"/></svg>
<div class="a" style="left:117.50px;top:611.94px;font-size:12px;line-height:12px;color:#333;letter-spacing:0.078px;">1.2. Verksamhetsbeskrivning</div>
<div class="a" style="left:398.50px;top:611.94px;font-size:12px;line-height:12px;color:#444;letter-spacing:-0.038px;">2020-09-16</div>
<div class="a" style="left:512.00px;top:611.94px;font-size:12px;line-height:12px;color:#444;letter-spacing:-0.038px;">2021-01-08</div>
<svg class="a" style="left:624px;top:613.4px" width="17" height="9" viewBox="0 0 17 9"><rect x="0.6" y="0.6" width="15.3" height="7.3" rx="1.3" fill="#fff" stroke="#444" stroke-width="1.1"/></svg>
<svg class="a" style="left:656px;top:607.3000000000001px" width="17" height="17" viewBox="0 0 17 17"><defs><clipPath id="sa2"><circle cx="8.5" cy="8.5" r="8"/></clipPath></defs><circle cx="8.5" cy="8.5" r="8" fill="#777"/><g clip-path="url(#sa2)"><ellipse cx="8.5" cy="7.5" rx="3.4" ry="4.3" fill="#bbb"/><path d="M1 17 Q8.5 10 16 17 Z" fill="#444"/></g></svg>
<div class="a" style="left:681.00px;top:610.44px;font-size:12px;line-height:12px;color:#444;letter-spacing:-0.049px;">Daniel Sten</div>
<div class="a" style="left:45px;top:632.85px;width:750px;height:31.75px;background:#ededed"></div>
<svg class="a" style="left:53px;top:642.0500000000001px" width="16" height="16" viewBox="0 0 16 16"><circle cx="8" cy="8" r="8" fill="#f6776d"/><rect x="6.8" y="3" width="2.4" height="6.8" rx="1" fill="#fff"/><circle cx="8" cy="12.2" r="1.3" fill="#fff"/></svg>
<svg class="a" style="left:86.5px;top:641.85px" width="12" height="17" viewBox="0 0 12 17"><path d="M1.2 3 L4.3 0.6 L11 8.3 L4.3 16 L1.2 13.6 L5.9 8.3 Z" fill="#3db3dc" stroke="#2d5a72" stroke-width="0.9" stroke-linejoin="round"/></svg>
<div class="a" style="left:117.50px;top:643.69px;font-size:12px;line-height:12px;color:#333;letter-spacing:0.096px;">3. Programförslag</div>
<div class="a" style="left:398.50px;top:643.69px;font-size:12px;line-height:12px;color:#444;letter-spacing:0.051px;">2021-01-11</div>
<div class="a" style="left:512.00px;top:643.69px;font-size:12px;line-height:12px;color:#444;letter-spacing:-0.038px;">2021-07-21</div>
<svg class="a" style="left:624px;top:645.15px" width="17" height="9" viewBox="0 0 17 9"><rect x="0.6" y="0.6" width="15.3" height="7.3" rx="1.3" fill="#fff" stroke="#444" stroke-width="1.1"/><rect x="1.6" y="1.6" width="2.2" height="5.3" fill="#6dd47e"/></svg>
<svg class="a" style="left:53px;top:673.8000000000001px" width="16" height="16" viewBox="0 0 16 16"><circle cx="8" cy="8" r="8" fill="#f6776d"/><rect x="6.8" y="3" width="2.4" height="6.8" rx="1" fill="#fff"/><circle cx="8" cy="12.2" r="1.3" fill="#fff"/></svg>
<svg class="a" style="left:86.5px;top:673.6px" width="12" height="17" viewBox="0 0 12 17"><path d="M1.2 3 L4.3 0.6 L11 8.3 L4.3 16 L1.2 13.6 L5.9 8.3 Z" fill="#3db3dc" stroke="#2d5a72" stroke-width="0.9" stroke-linejoin="round"/></svg>
<div class="a" style="left:117.50px;top:675.44px;font-size:12px;line-height:12px;color:#333;letter-spacing:0.107px;">3.1. Funktionsbeskrivning</div>
<div class="a" style="left:398.50px;top:675.44px;font-size:12px;line-height:12px;color:#444;letter-spacing:0.051px;">2021-01-11</div>
<div class="a" style="left:512.00px;top:675.44px;font-size:12px;line-height:12px;color:#444;letter-spacing:-0.038px;">2021-04-07</div>
<svg class="a" style="left:624px;top:676.9px" width="17" height="9" viewBox="0 0 17 9"><rect x="0.6" y="0.6" width="15.3" height="7.3" rx="1.3" fill="#fff" stroke="#444" stroke-width="1.1"/><rect x="1.6" y="1.6" width="2.2" height="5.3" fill="#6dd47e"/></svg>
<div class="a" style="left:45px;top:696.35px;width:750px;height:31.75px;background:#ededed"></div>
<svg class="a" style="left:53px;top:705.5500000000001px" width="16" height="16" viewBox="0 0 16 16"><circle cx="8" cy="8" r="8" fill="#6fd57c"/><rect x="6.8" y="3" width="2.4" height="6.8" rx="1" fill="#fff"/><circle cx="8" cy="12.2" r="1.3" fill="#fff"/></svg>
<svg class="a" style="left:86.5px;top:705.35px" width="12" height="17" viewBox="0 0 12 17"><path d="M1.2 3 L4.3 0.6 L11 8.3 L4.3 16 L1.2 13.6 L5.9 8.3 Z" fill="#3db3dc" stroke="#2d5a72" stroke-width="0.9" stroke-linejoin="round"/></svg>
<div class="a" style="left:117.50px;top:707.19px;font-size:12px;line-height:12px;color:#333;letter-spacing:0.087px;">3.2. Upphandla konsulter</div>
<div class="a" style="left:398.50px;top:707.19px;font-size:12px;line-height:12px;color:#444;letter-spacing:-0.038px;">2021-04-08</div>
<div class="a" style="left:512.00px;top:707.19px;font-size:12px;line-height:12px;color:#444;letter-spacing:-0.038px;">2021-05-19</div>
<svg class="a" style="left:624px;top:708.65px" width="17" height="9" viewBox="0 0 17 9"><rect x="0.6" y="0.6" width="15.3" height="7.3" rx="1.3" fill="#fff" stroke="#444" stroke-width="1.1"/><rect x="1.6" y="1.6" width="2.2" height="5.3" fill="#6dd47e"/></svg>
<svg class="a" style="left:86.5px;top:737.1px" width="12" height="17" viewBox="0 0 12 17"><path d="M1.2 3 L4.3 0.6 L11 8.3 L4.3 16 L1.2 13.6 L5.9 8.3 Z" fill="#3db3dc" stroke="#2d5a72" stroke-width="0.9" stroke-linejoin="round"/></svg>
<div class="a" style="left:117.50px;top:738.94px;font-size:12px;line-height:12px;color:#333;letter-spacing:0.049px;">3.3. Förslagshandling</div>
<div class="a" style="left:398.50px;top:738.94px;font-size:12px;line-height:12px;color:#444;letter-spacing:-0.038px;">2021-05-20</div>
<div class="a" style="left:512.00px;top:738.94px;font-size:12px;line-height:12px;color:#444;letter-spacing:-0.038px;">2021-07-21</div>
<svg class="a" style="left:624px;top:740.4px" width="17" height="9" viewBox="0 0 17 9"><rect x="0.6" y="0.6" width="15.3" height="7.3" rx="1.3" fill="#fff" stroke="#444" stroke-width="1.1"/><rect x="1.6" y="1.6" width="5.2" height="5.3" fill="#6dd47e"/></svg>
<div class="a" style="left:45px;top:759.85px;width:750px;height:31.75px;background:#ededed"></div>
<svg class="a" style="left:86.5px;top:768.85px" width="12" height="17" viewBox="0 0 12 17"><path d="M1.2 3 L4.3 0.6 L11 8.3 L4.3 16 L1.2 13.6 L5.9 8.3 Z" fill="#3db3dc" stroke="#2d5a72" stroke-width="0.9" stroke-linejoin="round"/></svg>
<div class="a" style="left:117.50px;top:770.69px;font-size:12px;line-height:12px;color:#333;letter-spacing:0.111px;">5.2. Upphandling</div>
<div class="a" style="left:398.50px;top:770.69px;font-size:12px;line-height:12px;color:#444;letter-spacing:-0.038px;">2022-02-09</div>
<div class="a" style="left:512.00px;top:770.69px;font-size:12px;line-height:12px;color:#444;letter-spacing:-0.038px;">2022-02-22</div>
<svg class="a" style="left:624px;top:772.15px" width="17" height="9" viewBox="0 0 17 9"><rect x="0.6" y="0.6" width="15.3" height="7.3" rx="1.3" fill="#fff" stroke="#444" stroke-width="1.1"/><rect x="1.6" y="1.6" width="1.2" height="5.3" fill="#6dd47e"/></svg>
<div class="a" style="left:804px;top:314px;width:772px;height:101px;background:#fff;border:1px solid #e4e4e4"></div>
<div class="a" style="left:807px;top:317px;width:4px;height:94.5px;background:#5060c0"></div>
<svg class="a" style="left:829px;top:320px" width="15" height="16" viewBox="0 0 15 16"><rect x="0.3" y="0" width="1.5" height="16" fill="#555"/><path d="M3 1 H14.5 V9.5 H3 Z" fill="#3f6fb5"/></svg>
<div class="a" style="left:852.40px;top:321.61px;font-size:17px;line-height:17px;color:#333;letter-spacing:-0.261px;">Risker</div>
<svg class="a" style="left:1509px;top:321.5px" width="60" height="14" viewBox="0 0 60 14"><path d="M1.5 7 H15 M10.2 1.8 L15.4 7 L10.2 12.2" stroke="#7a7a7a" stroke-width="2.6" fill="none" stroke-linecap="round" stroke-linejoin="round"/>
<path d="M22.4 2.6 H37 L29.7 11 Z" fill="#7a7a7a"/>
<path d="M45.5 1.8 L56.2 12.5 M56.2 1.8 L45.5 12.5" stroke="#7a7a7a" stroke-width="2.4" stroke-linecap="round"/></svg>
<svg class="a" style="left:830.7px;top:350.6px" width="16" height="16" viewBox="0 0 16 16"><path d="M0 0 H16 L0 16 Z" fill="#f6776d"/></svg>
<div class="a" style="left:849.00px;top:355.80px;font-size:21.5px;line-height:21.5px;color:#3a3a3a;">0</div>
<div class="a" style="left:841.40px;top:384.53px;font-size:16.5px;line-height:16.5px;color:#555;letter-spacing:0.691px;">hög</div>
<svg class="a" style="left:892.6px;top:350.6px" width="16" height="16" viewBox="0 0 16 16"><path d="M0 0 H16 L0 16 Z" fill="#f8c443"/></svg>
<div class="a" style="left:915.60px;top:355.80px;font-size:21.5px;line-height:21.5px;color:#3a3a3a;">4</div>
<div class="a" style="left:895.00px;top:384.53px;font-size:16.5px;line-height:16.5px;color:#555;letter-spacing:0.595px;">normal</div>
<svg class="a" style="left:962.4px;top:350.6px" width="16" height="16" viewBox="0 0 16 16"><path d="M0 0 H16 L0 16 Z" fill="#6fd57c"/></svg>
<div class="a" style="left:983.00px;top:355.80px;font-size:21.5px;line-height:21.5px;color:#3a3a3a;">1</div>
<div class="a" style="left:976.50px;top:384.53px;font-size:16.5px;line-height:16.5px;color:#555;letter-spacing:0.328px;">låg</div>
<svg class="a" style="left:1024.3px;top:350.6px" width="16" height="16" viewBox="0 0 16 16"><path d="M0 0 H16 L0 16 Z" fill="#a5a5a5"/></svg>
<div class="a" style="left:1043.00px;top:355.80px;font-size:21.5px;line-height:21.5px;color:#3a3a3a;">5</div>
<div class="a" style="left:1035.80px;top:384.53px;font-size:16.5px;line-height:16.5px;color:#555;letter-spacing:0.304px;">alla</div>
<div class="a" style="left:804px;top:423px;width:772px;height:100.5px;background:#fff;border:1px solid #e4e4e4"></div>
<div class="a" style="left:807px;top:426px;width:4px;height:94.0px;background:#5060c0"></div>
<svg class="a" style="left:829px;top:430px" width="15" height="14" viewBox="0 0 15 14"><rect x="0" y="0" width="1.3" height="14" fill="#777"/><rect x="3" y="1.5" width="6" height="4" fill="#3f6fb5"/><rect x="3" y="7.5" width="11.5" height="4" fill="#3f6fb5"/></svg>
<div class="a" style="left:852.40px;top:430.61px;font-size:17px;line-height:17px;color:#333;letter-spacing:0.418px;">Mina aktiviteter</div>
<svg class="a" style="left:1509px;top:430.5px" width="60" height="14" viewBox="0 0 60 14"><path d="M1.5 7 H15 M10.2 1.8 L15.4 7 L10.2 12.2" stroke="#7a7a7a" stroke-width="2.6" fill="none" stroke-linecap="round" stroke-linejoin="round"/>
<path d="M22.4 2.6 H37 L29.7 11 Z" fill="#7a7a7a"/>
<path d="M45.5 1.8 L56.2 12.5 M56.2 1.8 L45.5 12.5" stroke="#7a7a7a" stroke-width="2.4" stroke-linecap="round"/></svg>
<svg class="a" style="left:830.7px;top:459px" width="16" height="16" viewBox="0 0 16 16"><path d="M0 0 H16 L0 16 Z" fill="#f6776d"/></svg>
<div class="a" style="left:866.00px;top:464.80px;font-size:21.5px;line-height:21.5px;color:#3a3a3a;">0</div>
<div class="a" style="left:833.20px;top:493.53px;font-size:16.5px;line-height:16.5px;color:#555;letter-spacing:0.602px;">försenade</div>
<svg class="a" style="left:924.8px;top:459px" width="16" height="16" viewBox="0 0 16 16"><path d="M0 0 H16 L0 16 Z" fill="#f8c443"/></svg>
<div class="a" style="left:943.70px;top:464.80px;font-size:21.5px;line-height:21.5px;color:#3a3a3a;">0</div>
<div class="a" style="left:933.50px;top:493.53px;font-size:16.5px;line-height:16.5px;color:#555;letter-spacing:0.702px;">idag</div>
<svg class="a" style="left:986.7px;top:459px" width="16" height="16" viewBox="0 0 16 16"><path d="M0 0 H16 L0 16 Z" fill="#6fd57c"/></svg>
<div class="a" style="left:1029.70px;top:464.80px;font-size:21.5px;line-height:21.5px;color:#3a3a3a;">0</div>
<div class="a" style="left:989.00px;top:493.53px;font-size:16.5px;line-height:16.5px;color:#555;letter-spacing:0.299px;">inom 7 da...</div>
<svg class="a" style="left:1098px;top:459px" width="16" height="16" viewBox="0 0 16 16"><path d="M0 0 H16 L0 16 Z" fill="#a5a5a5"/></svg>
<div class="a" style="left:1116.40px;top:464.80px;font-size:21.5px;line-height:21.5px;color:#3a3a3a;">0</div>
<div class="a" style="left:1110.00px;top:493.53px;font-size:16.5px;line-height:16.5px;color:#555;letter-spacing:0.154px;">alla</div>
<div class="a" style="left:804px;top:532.5px;width:772px;height:229px;background:#fff;border:1px solid #e4e4e4"></div>
<div class="a" style="left:807px;top:535.5px;width:4px;height:222.5px;background:#5060c0"></div>
<svg class="a" style="left:828px;top:538px" width="17" height="16" viewBox="0 0 17 16"><path d="M4 2 L10 1 L15 4 L16 13 L6 14 Z" fill="#f0f0f0" stroke="#999" stroke-width="0.8"/><path d="M1 5 H6 L7 6.5 H13 L12 14 H2 Z" fill="#e8c060" stroke="#a88530" stroke-width="0.8"/></svg>
<div class="a" style="left:852.00px;top:540.11px;font-size:17px;line-height:17px;color:#333;letter-spacing:0.476px;">Styrande dokument</div>
<svg class="a" style="left:1509px;top:540px" width="60" height="14" viewBox="0 0 60 14"><path d="M1.5 7 H15 M10.2 1.8 L15.4 7 L10.2 12.2" stroke="#7a7a7a" stroke-width="2.6" fill="none" stroke-linecap="round" stroke-linejoin="round"/>
<path d="M22.4 11 L29.7 2.6 L37 11 Z" fill="#7a7a7a"/>
<path d="M45.5 1.8 L56.2 12.5 M56.2 1.8 L45.5 12.5" stroke="#7a7a7a" stroke-width="2.4" stroke-linecap="round"/></svg>
<div class="a" style="left:823.5px;top:564.5px;width:749.5px;height:31.5px;background:#ededed"></div>
<div class="a" style="left:864.50px;top:574.77px;font-size:11.5px;line-height:11.5px;color:#333;font-weight:700;letter-spacing:-0.163px;">Namn</div>
<div class="a" style="left:1343.80px;top:574.77px;font-size:11.5px;line-height:11.5px;color:#333;font-weight:700;letter-spacing:-0.041px;">Ändrad</div>
<div class="a" style="left:1492.00px;top:574.77px;font-size:11.5px;line-height:11.5px;color:#333;font-weight:700;letter-spacing:-0.121px;">Version</div>
<svg class="a" style="left:830px;top:604.0px" width="17" height="16" viewBox="0 0 17 16"><path d="M3.5 0.5 H12.5 L16.5 4.5 V15.5 H3.5 Z" fill="#fff" stroke="#aaa" stroke-width="0.9"/><rect x="0.5" y="5" width="9" height="8.5" fill="#d0312d"/><path d="M2.5 12 L5 6.5 L7.5 12 M3.3 10.2 H6.7" stroke="#fff" stroke-width="1.2" fill="none"/><path d="M10 13 Q12 9 13.5 6 Q14 10 15.5 12" stroke="#d0312d" stroke-width="1" fill="none"/></svg>
<div class="a" style="left:867.30px;top:607.34px;font-size:12px;line-height:12px;color:#444;letter-spacing:0.103px;">INS-0851-v.2.0 hur förvara verktyg.pdf</div>
<div class="a" style="left:1342.40px;top:607.34px;font-size:12px;line-height:12px;color:#444;">2021-06-14</div>
<div class="a" style="left:1490.80px;top:607.34px;font-size:12px;line-height:12px;color:#444;letter-spacing:-0.160px;">2.0</div>
<svg class="a" style="left:1551px;top:605.5px" width="15" height="15" viewBox="0 0 15 15"><path d="M1 0 H6.5 L10 3.5 V6.5 L3.5 13 H1 Z" fill="#1898a6"/><path d="M6.3 0.2 V3.7 H9.8" stroke="#dff" stroke-width="0.9" fill="none"/><path d="M5.5 12.6 L12.2 7.2" stroke="#333" stroke-width="2.6" stroke-linecap="round"/></svg>
<div class="a" style="left:823.5px;top:627.6px;width:749.5px;height:31.6px;background:#ededed"></div>
<svg class="a" style="left:830px;top:635.6px" width="17" height="16" viewBox="0 0 17 16"><path d="M3.5 0.5 H12.5 L16.5 4.5 V15.5 H3.5 Z" fill="#fff" stroke="#aaa" stroke-width="0.9"/><path d="M11 4 V15 M14 4 V15 M9 7 H16.5 M9 10 H16.5" stroke="#9bc" stroke-width="0.7"/><rect x="0.5" y="5" width="8.5" height="8.5" fill="#2a8a4a"/><path d="M2.5 7 L7 12 M7 7 L2.5 12" stroke="#fff" stroke-width="1.3"/></svg>
<div class="a" style="left:867.30px;top:638.94px;font-size:12px;line-height:12px;color:#444;letter-spacing:0.158px;">MAL-0006-v.5.0 FMEA MALL - APQP.xlsx</div>
<div class="a" style="left:1342.40px;top:638.94px;font-size:12px;line-height:12px;color:#444;letter-spacing:0.081px;">2019-11-27</div>
<div class="a" style="left:1490.80px;top:638.94px;font-size:12px;line-height:12px;color:#444;letter-spacing:-0.160px;">5.0</div>
<svg class="a" style="left:1551px;top:637.1px" width="15" height="15" viewBox="0 0 15 15"><path d="M1 0 H6.5 L10 3.5 V6.5 L3.5 13 H1 Z" fill="#1898a6"/><path d="M6.3 0.2 V3.7 H9.8" stroke="#dff" stroke-width="0.9" fill="none"/><path d="M5.5 12.6 L12.2 7.2" stroke="#333" stroke-width="2.6" stroke-linecap="round"/></svg>
<svg class="a" style="left:830px;top:667.2px" width="17" height="16" viewBox="0 0 17 16"><path d="M3.5 0.5 H12.5 L16.5 4.5 V15.5 H3.5 Z" fill="#fff" stroke="#aaa" stroke-width="0.9"/><rect x="0.5" y="5" width="9" height="8.5" fill="#d0312d"/><path d="M2.5 12 L5 6.5 L7.5 12 M3.3 10.2 H6.7" stroke="#fff" stroke-width="1.2" fill="none"/><path d="M10 13 Q12 9 13.5 6 Q14 10 15.5 12" stroke="#d0312d" stroke-width="1" fill="none"/></svg>
<div class="a" style="left:867.30px;top:670.54px;font-size:12px;line-height:12px;color:#444;letter-spacing:0.286px;">PD-0070-v.2.0 Avtal.pdf</div>
<div class="a" style="left:1342.40px;top:670.54px;font-size:12px;line-height:12px;color:#444;letter-spacing:0.081px;">2018-11-13</div>
<div class="a" style="left:1490.80px;top:670.54px;font-size:12px;line-height:12px;color:#444;letter-spacing:-0.160px;">2.0</div>
<svg class="a" style="left:1552px;top:668.7px" width="11" height="15" viewBox="0 0 11 15"><path d="M0.3 0 H6.3 L10.2 3.9 V14 H0.3 Z" fill="#1898a6"/><path d="M6.1 0.2 V4.1 H10" stroke="#dff" stroke-width="0.9" fill="none"/></svg>
<div class="a" style="left:823.5px;top:690.8px;width:749.5px;height:31.6px;background:#ededed"></div>
<svg class="a" style="left:830px;top:698.8px" width="17" height="16" viewBox="0 0 17 16"><path d="M3.5 0.5 H12.5 L16.5 4.5 V15.5 H3.5 Z" fill="#fff" stroke="#aaa" stroke-width="0.9"/><rect x="0.5" y="5" width="9" height="8.5" fill="#d0312d"/><path d="M2.5 12 L5 6.5 L7.5 12 M3.3 10.2 H6.7" stroke="#fff" stroke-width="1.2" fill="none"/><path d="M10 13 Q12 9 13.5 6 Q14 10 15.5 12" stroke="#d0312d" stroke-width="1" fill="none"/></svg>
<div class="a" style="left:867.30px;top:702.14px;font-size:12px;line-height:12px;color:#444;letter-spacing:0.112px;">PD-0285-v.3.0 Checklista.pdf</div>
<div class="a" style="left:1342.40px;top:702.14px;font-size:12px;line-height:12px;color:#444;">2022-05-12</div>
<div class="a" style="left:1490.80px;top:702.14px;font-size:12px;line-height:12px;color:#444;letter-spacing:-0.160px;">3.0</div>
<svg class="a" style="left:1552px;top:700.3px" width="11" height="15" viewBox="0 0 11 15"><path d="M0.3 0 H6.3 L10.2 3.9 V14 H0.3 Z" fill="#1898a6"/><path d="M6.1 0.2 V4.1 H10" stroke="#dff" stroke-width="0.9" fill="none"/></svg>
<svg class="a" style="left:830px;top:730.4px" width="17" height="16" viewBox="0 0 17 16"><path d="M3.5 0.5 H12.5 L16.5 4.5 V15.5 H3.5 Z" fill="#fff" stroke="#aaa" stroke-width="0.9"/><path d="M11 4 V15 M14 4 V15 M9 7 H16.5 M9 10 H16.5" stroke="#9bc" stroke-width="0.7"/><rect x="0.5" y="5" width="8.5" height="8.5" fill="#2a8a4a"/><path d="M2.5 7 L7 12 M7 7 L2.5 12" stroke="#fff" stroke-width="1.3"/></svg>
<div class="a" style="left:867.30px;top:733.74px;font-size:12px;line-height:12px;color:#444;letter-spacing:-0.015px;">PD-0914-v.3.0 Mall Skåpskort.xlsx</div>
<div class="a" style="left:1342.40px;top:733.74px;font-size:12px;line-height:12px;color:#444;letter-spacing:0.081px;">2021-11-22</div>
<div class="a" style="left:1490.80px;top:733.74px;font-size:12px;line-height:12px;color:#444;letter-spacing:-0.160px;">3.0</div>
<svg class="a" style="left:1552px;top:731.9px" width="11" height="15" viewBox="0 0 11 15"><path d="M0.3 0 H6.3 L10.2 3.9 V14 H0.3 Z" fill="#1898a6"/><path d="M6.1 0.2 V4.1 H10" stroke="#dff" stroke-width="0.9" fill="none"/></svg>
<svg class="a" style="left:0px;top:0px" width="1600" height="900" viewBox="0 0 1600 900"><g><g transform="translate(20.5 830.0)" opacity="0.2"><path d="M1382.6 36.2 A11.6 12.1 0 1 0 1382.6 52.4" stroke="#ffffff" stroke-width="2.7" fill="none" stroke-miterlimit="1.5"/><path d="M1386.8 57.2 L1398.5 30.6 L1410.2 57.2 M1390.5 48.6 H1406.5" stroke="#ffffff" stroke-width="2.7" fill="none" stroke-miterlimit="1.5"/><path d="M1415.6 57.2 V31.0 L1436.1 57.4 V31.2" stroke="#ffffff" stroke-width="2.7" fill="none" stroke-miterlimit="1.5"/><path d="M1456.3 32.7 H1443.7 V55.8 H1456.5 M1443.7 43.6 H1455.8" stroke="#ffffff" stroke-width="2.7" fill="none" stroke-miterlimit="1.5"/><path d="M1459 57.2 L1470.7 30.6 L1482.4 57.2 M1462.7 48.6 H1478.7" stroke="#ffffff" stroke-width="2.7" fill="none" stroke-miterlimit="1.5"/><ellipse cx="1505" cy="44.2" rx="10.2" ry="10.5" stroke="#ffffff" stroke-width="5.3" fill="none"/><path d="M1520.4 56.8 V31.2 H1527.5 L1540 47.5 V31.2 H1546.5 V56.8 H1539.5 L1527 40.5 V56.8 Z" fill="#ffffff"/><path d="M1549.8 31.2 H1566.1 V37.8 H1556.6 V42.2 H1565.5 V47 H1556.6 V51.1 H1566.1 V56.8 H1549.8 Z" fill="#ffffff"/></g></g></svg>
<div class="a" style="left:10px;top:861px;width:1580px;height:13px;background:#fff"></div>
</body></html>
